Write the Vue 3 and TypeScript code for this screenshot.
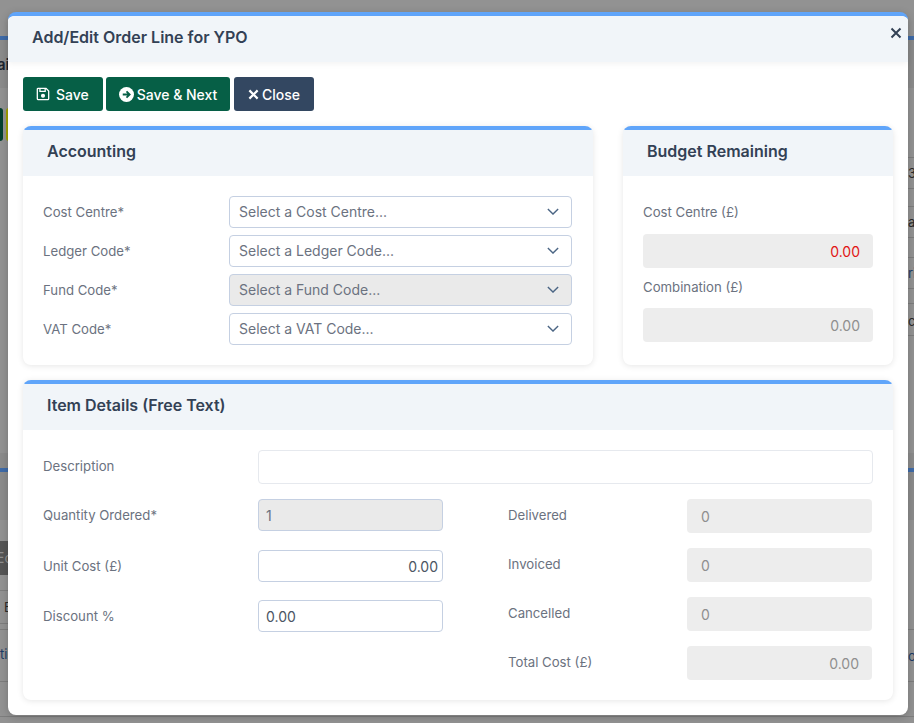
<template>
    <div class="page">
        <!-- dimmed page behind the dialog -->
        <div class="backdrop">
            <div class="bg-band bg-band-top"></div>
            <div class="bg-band bg-band-bottom"></div>
            <div class="bg-line bg-line-top"></div>
            <div class="bg-line bg-line-bottom"></div>
            <span class="bg-title">ai</span>
            <div class="bg-btn bg-btn-green"></div>
            <div class="bg-btn bg-btn-yellow"></div>
            <div class="bg-head"><span>Ec</span></div>
            <span
                v-for="frag in bgTexts"
                :key="frag.text"
                class="bg-text"
                :class="{ 'bg-link': frag.link }"
                :style="{ top: frag.top + 'px', left: frag.left + 'px' }"
            >{{ frag.text }}</span>
            <div
                v-for="rule in bgRules"
                :key="rule.top + rule.side"
                class="bg-rule"
                :class="rule.side"
                :style="{ top: rule.top + 'px' }"
            ></div>
        </div>

        <div class="modal">
            <div class="modal-header">
                <h1>Add/Edit Order Line for YPO</h1>
                <svg class="modal-close" viewBox="0 0 12 12" width="12" height="12">
                    <path d="M1.5 1.5l9 9M10.5 1.5l-9 9" />
                </svg>
            </div>

            <div class="modal-body">
                <div class="toolbar">
                    <button class="btn btn-green btn-save">
                        <svg viewBox="0 0 16 16" width="14" height="14" class="ico-outline">
                            <path d="M2.5 1.5h9l3 3v9a1 1 0 0 1-1 1h-11a1 1 0 0 1-1-1v-11a1 1 0 0 1 1-1z" />
                            <path d="M4.5 1.5v3.5h6v-3.5" />
                            <circle cx="8" cy="10" r="1.6" fill="#fff" />
                        </svg>
                        Save
                    </button>
                    <button class="btn btn-green btn-next">
                        <svg viewBox="0 0 16 16" width="15" height="15">
                            <circle cx="8" cy="8" r="8" fill="#fff" />
                            <path d="M4 8h7M8 4.6L11.4 8 8 11.4" fill="none" stroke="#065f46" stroke-width="1.9" />
                        </svg>
                        Save &amp; Next
                    </button>
                    <button class="btn btn-slate btn-close">
                        <svg viewBox="0 0 12 12" width="11" height="11">
                            <path d="M1.5 1.5l9 9M10.5 1.5l-9 9" fill="none" stroke="#fff" stroke-width="2.4" />
                        </svg>
                        Close
                    </button>
                </div>

                <div class="top-row">
                    <section class="card card-accounting">
                        <h2>Accounting</h2>
                        <div class="card-body accounting-body">
                            <div v-for="field in selects" :key="field.label" class="select-row">
                                <label>{{ field.label }}</label>
                                <div class="select" :class="{ disabled: field.disabled }">
                                    <span>{{ field.placeholder }}</span>
                                    <svg viewBox="0 0 14 8" width="12" height="7">
                                        <path d="M1 1l6 6 6-6" />
                                    </svg>
                                </div>
                            </div>
                        </div>
                    </section>

                    <section class="card card-budget">
                        <h2>Budget Remaining</h2>
                        <div class="card-body budget-body">
                            <label>Cost Centre (£)</label>
                            <div class="readonly num danger">0.00</div>
                            <label>Combination (£)</label>
                            <div class="readonly num">0.00</div>
                        </div>
                    </section>
                </div>

                <section class="card">
                    <h2>Item Details (Free Text)</h2>
                    <div class="card-body item-body">
                        <div class="desc-row">
                            <label>Description</label>
                            <div class="input desc-input"></div>
                        </div>
                        <div class="item-cols">
                            <div class="item-col left-col">
                                <div class="item-row">
                                    <label>Quantity Ordered*</label>
                                    <div class="input short disabled">1</div>
                                </div>
                                <div class="item-row">
                                    <label>Unit Cost (£)</label>
                                    <div class="input short num dark">0.00</div>
                                </div>
                                <div class="item-row discount-row">
                                    <label>Discount %</label>
                                    <div class="input short dark">0.00</div>
                                </div>
                            </div>
                            <div class="item-col right-col">
                                <div v-for="row in totals" :key="row.label" class="total-row">
                                    <label>{{ row.label }}</label>
                                    <div class="readonly" :class="{ num: row.num }">{{ row.value }}</div>
                                </div>
                            </div>
                        </div>
                    </div>
                </section>
            </div>
        </div>
    </div>
</template>

<script setup lang="ts">
const selects = [
    { label: 'Cost Centre*', placeholder: 'Select a Cost Centre...', disabled: false },
    { label: 'Ledger Code*', placeholder: 'Select a Ledger Code...', disabled: false },
    { label: 'Fund Code*', placeholder: 'Select a Fund Code...', disabled: true },
    { label: 'VAT Code*', placeholder: 'Select a VAT Code...', disabled: false },
]

const totals = [
    { label: 'Delivered', value: '0', num: false },
    { label: 'Invoiced', value: '0', num: false },
    { label: 'Cancelled', value: '0', num: false },
    { label: 'Total Cost (£)', value: '0.00', num: true },
]

// slivers of the page that stick out beside the dialog
const bgTexts = [
    { text: 'E', top: 599, left: 4, link: false },
    { text: 'tic', top: 646, left: 0, link: true },
    { text: '3', top: 165, left: 908, link: false },
    { text: 'a', top: 214, left: 908, link: false },
    { text: 'ri', top: 265, left: 908, link: true },
    { text: 'c', top: 313, left: 908, link: false },
    { text: 'o', top: 648, left: 908, link: true },
]

const bgRules = [
    { top: 157, side: 'right' },
    { top: 188, side: 'right' },
    { top: 206, side: 'right' },
    { top: 237, side: 'right' },
    { top: 257, side: 'right' },
    { top: 288, side: 'right' },
    { top: 303, side: 'right' },
    { top: 335, side: 'right' },
    { top: 629, side: 'right' },
    { top: 681, side: 'right' },
    { top: 590, side: 'left' },
    { top: 623, side: 'left' },
    { top: 629, side: 'left' },
    { top: 681, side: 'left' },
]
</script>

<style>
html,
body {
    margin: 0;
    background: #929292;
}
</style>

<style scoped>
* {
    box-sizing: border-box;
}

.page {
    position: relative;
    width: 914px;
    height: 723px;
    padding: 12px 6px 8px 8px;
    overflow: hidden;
    background-color: #929292;
    font-family: "Inter", "Liberation Sans", sans-serif;
    color: #334155;
}

.backdrop {
    position: absolute;
    inset: 0;
}

.bg-band {
    position: absolute;
    left: 0;
    right: 0;
    background-color: #8b8b8b;
}

.bg-band-top {
    top: 36px;
    height: 52px;
}

.bg-band-bottom {
    top: 453px;
    height: 67px;
}

.bg-line {
    position: absolute;
    left: 0;
    right: 0;
    height: 4px;
    background-color: #3f6ba8;
}

.bg-line-top {
    top: 36px;
}

.bg-line-bottom {
    top: 468px;
}

.bg-title {
    position: absolute;
    top: 55px;
    left: -3px;
    font-size: 15px;
    font-weight: 600;
    color: #1c2430;
}

.bg-btn {
    position: absolute;
    top: 108px;
    height: 33px;
}

.bg-btn-green {
    left: 0;
    width: 3px;
    border-radius: 0 3px 3px 0;
    background-color: #04402f;
}

.bg-btn-yellow {
    left: 6px;
    width: 4px;
    border-radius: 3px 0 0 3px;
    background-color: #a3a300;
}

.bg-head {
    position: absolute;
    top: 541px;
    left: 0;
    width: 10px;
    height: 34px;
    overflow: hidden;
    background-color: #555;
    color: #8f8f8f;
    font-size: 14px;
    line-height: 34px;
}

.bg-head span {
    margin-left: -4px;
}

.bg-text {
    position: absolute;
    font-size: 13px;
    color: #2a2a2a;
}

.bg-link {
    color: #1d3c66;
}

.bg-rule {
    position: absolute;
    width: 10px;
    height: 1px;
    background-color: #7d7d7d;
}

.bg-rule.left {
    left: 0;
}

.bg-rule.right {
    right: 0;
}

.backdrop::after {
    content: "";
    position: absolute;
    top: 716px;
    left: 0;
    right: 0;
    height: 1px;
    background-color: #7d7d7d;
}

.modal {
    position: relative;
    height: 703px;
    border-top: 4px solid #60a5fa;
    border-radius: 8px;
    background-color: #fff;
    box-shadow: 0 2px 8px rgba(0, 0, 0, 0.2);
}

.modal-header {
    display: flex;
    align-items: center;
    justify-content: space-between;
    height: 46px;
    padding: 0 13px 4px 24px;
    border-radius: 6px 6px 0 0;
    background-color: #f1f5f9;
    box-shadow: 0 2px 6px rgba(0, 0, 0, 0.05);
}

h1 {
    margin: 0;
    font-size: 16px;
    font-weight: 600;
    color: #334155;
}

.modal-close {
    align-self: flex-start;
    margin-top: 11px;
    margin-right: -7px;
    fill: none;
    stroke: #334155;
    stroke-width: 2;
}

.modal-body {
    display: flex;
    flex-direction: column;
    padding: 15px 15px 0;
}

.toolbar {
    display: flex;
    gap: 3px;
    margin-bottom: 15px;
}

.btn {
    display: flex;
    align-items: center;
    justify-content: center;
    height: 34px;
    padding: 0;
    border: none;
    border-radius: 3px;
    color: #fff;
    font-family: inherit;
    font-size: 14px;
    font-weight: 500;
}

.btn-green {
    background-color: #065f46;
}

.btn-slate {
    margin-left: 1px;
    background-color: #334761;
}

.btn-save {
    justify-content: flex-start;
    gap: 6px;
    width: 80px;
    padding-left: 13px;
}

.btn-next {
    gap: 3px;
    width: 124px;
}

.btn-close {
    gap: 3px;
    width: 80px;
}

.ico-outline {
    fill: none;
    stroke: #fff;
    stroke-width: 1.5;
}

.top-row {
    display: flex;
    gap: 30px;
    margin-bottom: 15px;
}

.card {
    border-top: 4px solid #60a5fa;
    border-radius: 8px;
    background-color: #fff;
    box-shadow: 0 1px 6px rgba(0, 0, 0, 0.1);
}

.card-accounting {
    width: 570px;
}

.card-budget {
    width: 270px;
}

h2 {
    display: flex;
    align-items: center;
    height: 46px;
    margin: 0;
    padding: 0 0 4px 24px;
    background-color: #f1f5f9;
    font-size: 16px;
    font-weight: 600;
    color: #334155;
}

label {
    font-size: 13.2px;
    line-height: 16px;
    color: #6b7280;
}

.card-body {
    padding: 20px;
}

.accounting-body {
    display: flex;
    flex-direction: column;
    gap: 7px;
}

.select-row {
    display: grid;
    grid-template-columns: 186px 343px;
    align-items: center;
}

.select {
    display: flex;
    align-items: center;
    justify-content: space-between;
    height: 32px;
    padding: 0 12px 1px 9px;
    border: 1px solid #c5d0e2;
    border-radius: 4px;
    font-size: 14px;
    color: #6b7280;
}

.select svg {
    fill: none;
    stroke: #4b6584;
    stroke-width: 1.6;
}

.select.disabled {
    background-color: #eaeaea;
}

.budget-body {
    display: flex;
    flex-direction: column;
}

.budget-body label {
    margin: 8px 0 14px;
}

.budget-body .readonly + label {
    margin: 11px 0 13px;
}

.readonly {
    display: flex;
    align-items: center;
    height: 34px;
    padding: 0 13px 0 14px;
    border-radius: 4px;
    background-color: #ededed;
    font-size: 14px;
    color: #8f8f8f;
}

.num {
    justify-content: flex-end;
}

.danger {
    color: #e11414;
}

.item-body {
    display: flex;
    flex-direction: column;
    gap: 15px;
}

.desc-row {
    display: grid;
    grid-template-columns: 215px 615px;
    align-items: center;
}

.desc-row label {
    margin-top: -2px;
}

.input {
    display: flex;
    align-items: center;
    border: 1px solid #c5d0e2;
    border-radius: 4px;
    font-size: 14px;
    color: #6b7280;
}

.desc-input {
    height: 34px;
    border-color: #e6e9ee;
}

.short {
    width: 185px;
    height: 32px;
    padding: 0 4px 0 7px;
}

.disabled {
    background-color: #eaeaea;
}

.dark {
    color: #4b5563;
}

.item-cols {
    display: flex;
}

.item-col {
    display: flex;
    flex-direction: column;
}

.left-col {
    width: 465px;
    gap: 19px;
}

.discount-row {
    margin-top: -1px;
}

.right-col {
    gap: 15px;
}

.item-row {
    display: grid;
    grid-template-columns: 215px 185px;
    align-items: center;
}

.total-row {
    display: grid;
    grid-template-columns: 179px 185px;
    align-items: center;
}

.total-row label {
    margin-top: -2px;
}
</style>
